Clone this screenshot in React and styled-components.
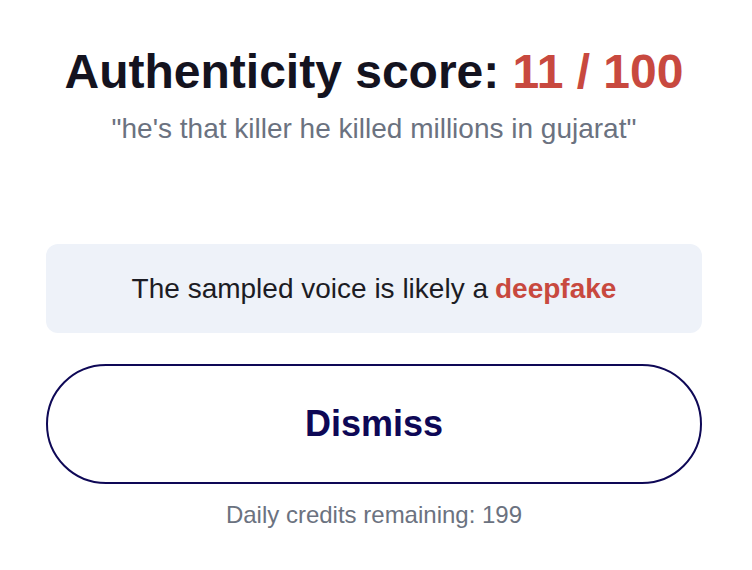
import React from "react";
import styled, { createGlobalStyle } from "styled-components";

const GlobalStyle = createGlobalStyle`
  html, body {
    margin: 0;
    padding: 0;
    background: #ffffff;
  }
  body {
    font-family: "Liberation Sans", Arial, Helvetica, sans-serif;
  }
`;

const Page = styled.main`
  width: 752px;
  height: 570px;
  box-sizing: border-box;
  padding: 44px 50px 0 46px;
  display: flex;
  flex-direction: column;
  align-items: stretch;
`;

const Header = styled.header`
  display: flex;
  flex-direction: column;
  align-items: center;
  gap: 13px;
`;

const Title = styled.h1`
  margin: 0;
  font-size: 48px;
  line-height: 56px;
  font-weight: 700;
  color: #14131f;
  white-space: nowrap;
`;

const Score = styled.span`
  color: #c8493f;
`;

const Quote = styled.p`
  margin: 0;
  font-size: 28px;
  line-height: 32px;
  color: #6b7280;
  white-space: nowrap;
`;

const Verdict = styled.div`
  margin-top: 99px;
  height: 89px;
  border-radius: 12px;
  background: #eef2f9;
  display: flex;
  align-items: center;
  justify-content: center;
  font-size: 28px;
  color: #1c1c24;
`;

const Highlight = styled.strong`
  color: #c8493f;
  font-weight: 700;
  margin-left: 0.25em;
`;

const DismissButton = styled.button`
  margin-top: 31px;
  height: 120px;
  box-sizing: border-box;
  border: 2px solid #0e0856;
  border-radius: 60px;
  background: #ffffff;
  font-family: inherit;
  font-size: 36px;
  font-weight: 700;
  color: #0e0856;
  cursor: pointer;
`;

const Credits = styled.p`
  margin: 17px 0 0;
  text-align: center;
  font-size: 24px;
  line-height: 28px;
  color: #6b7280;
`;

export default function App() {
  return (
    <>
      <GlobalStyle />
      <Page>
        <Header>
          <Title>
            Authenticity score: <Score>11 / 100</Score>
          </Title>
          <Quote>"he's that killer he killed millions in gujarat"</Quote>
        </Header>
        <Verdict>
          The sampled voice is likely a<Highlight>deepfake</Highlight>
        </Verdict>
        <DismissButton>Dismiss</DismissButton>
        <Credits>Daily credits remaining: 199</Credits>
      </Page>
    </>
  );
}
